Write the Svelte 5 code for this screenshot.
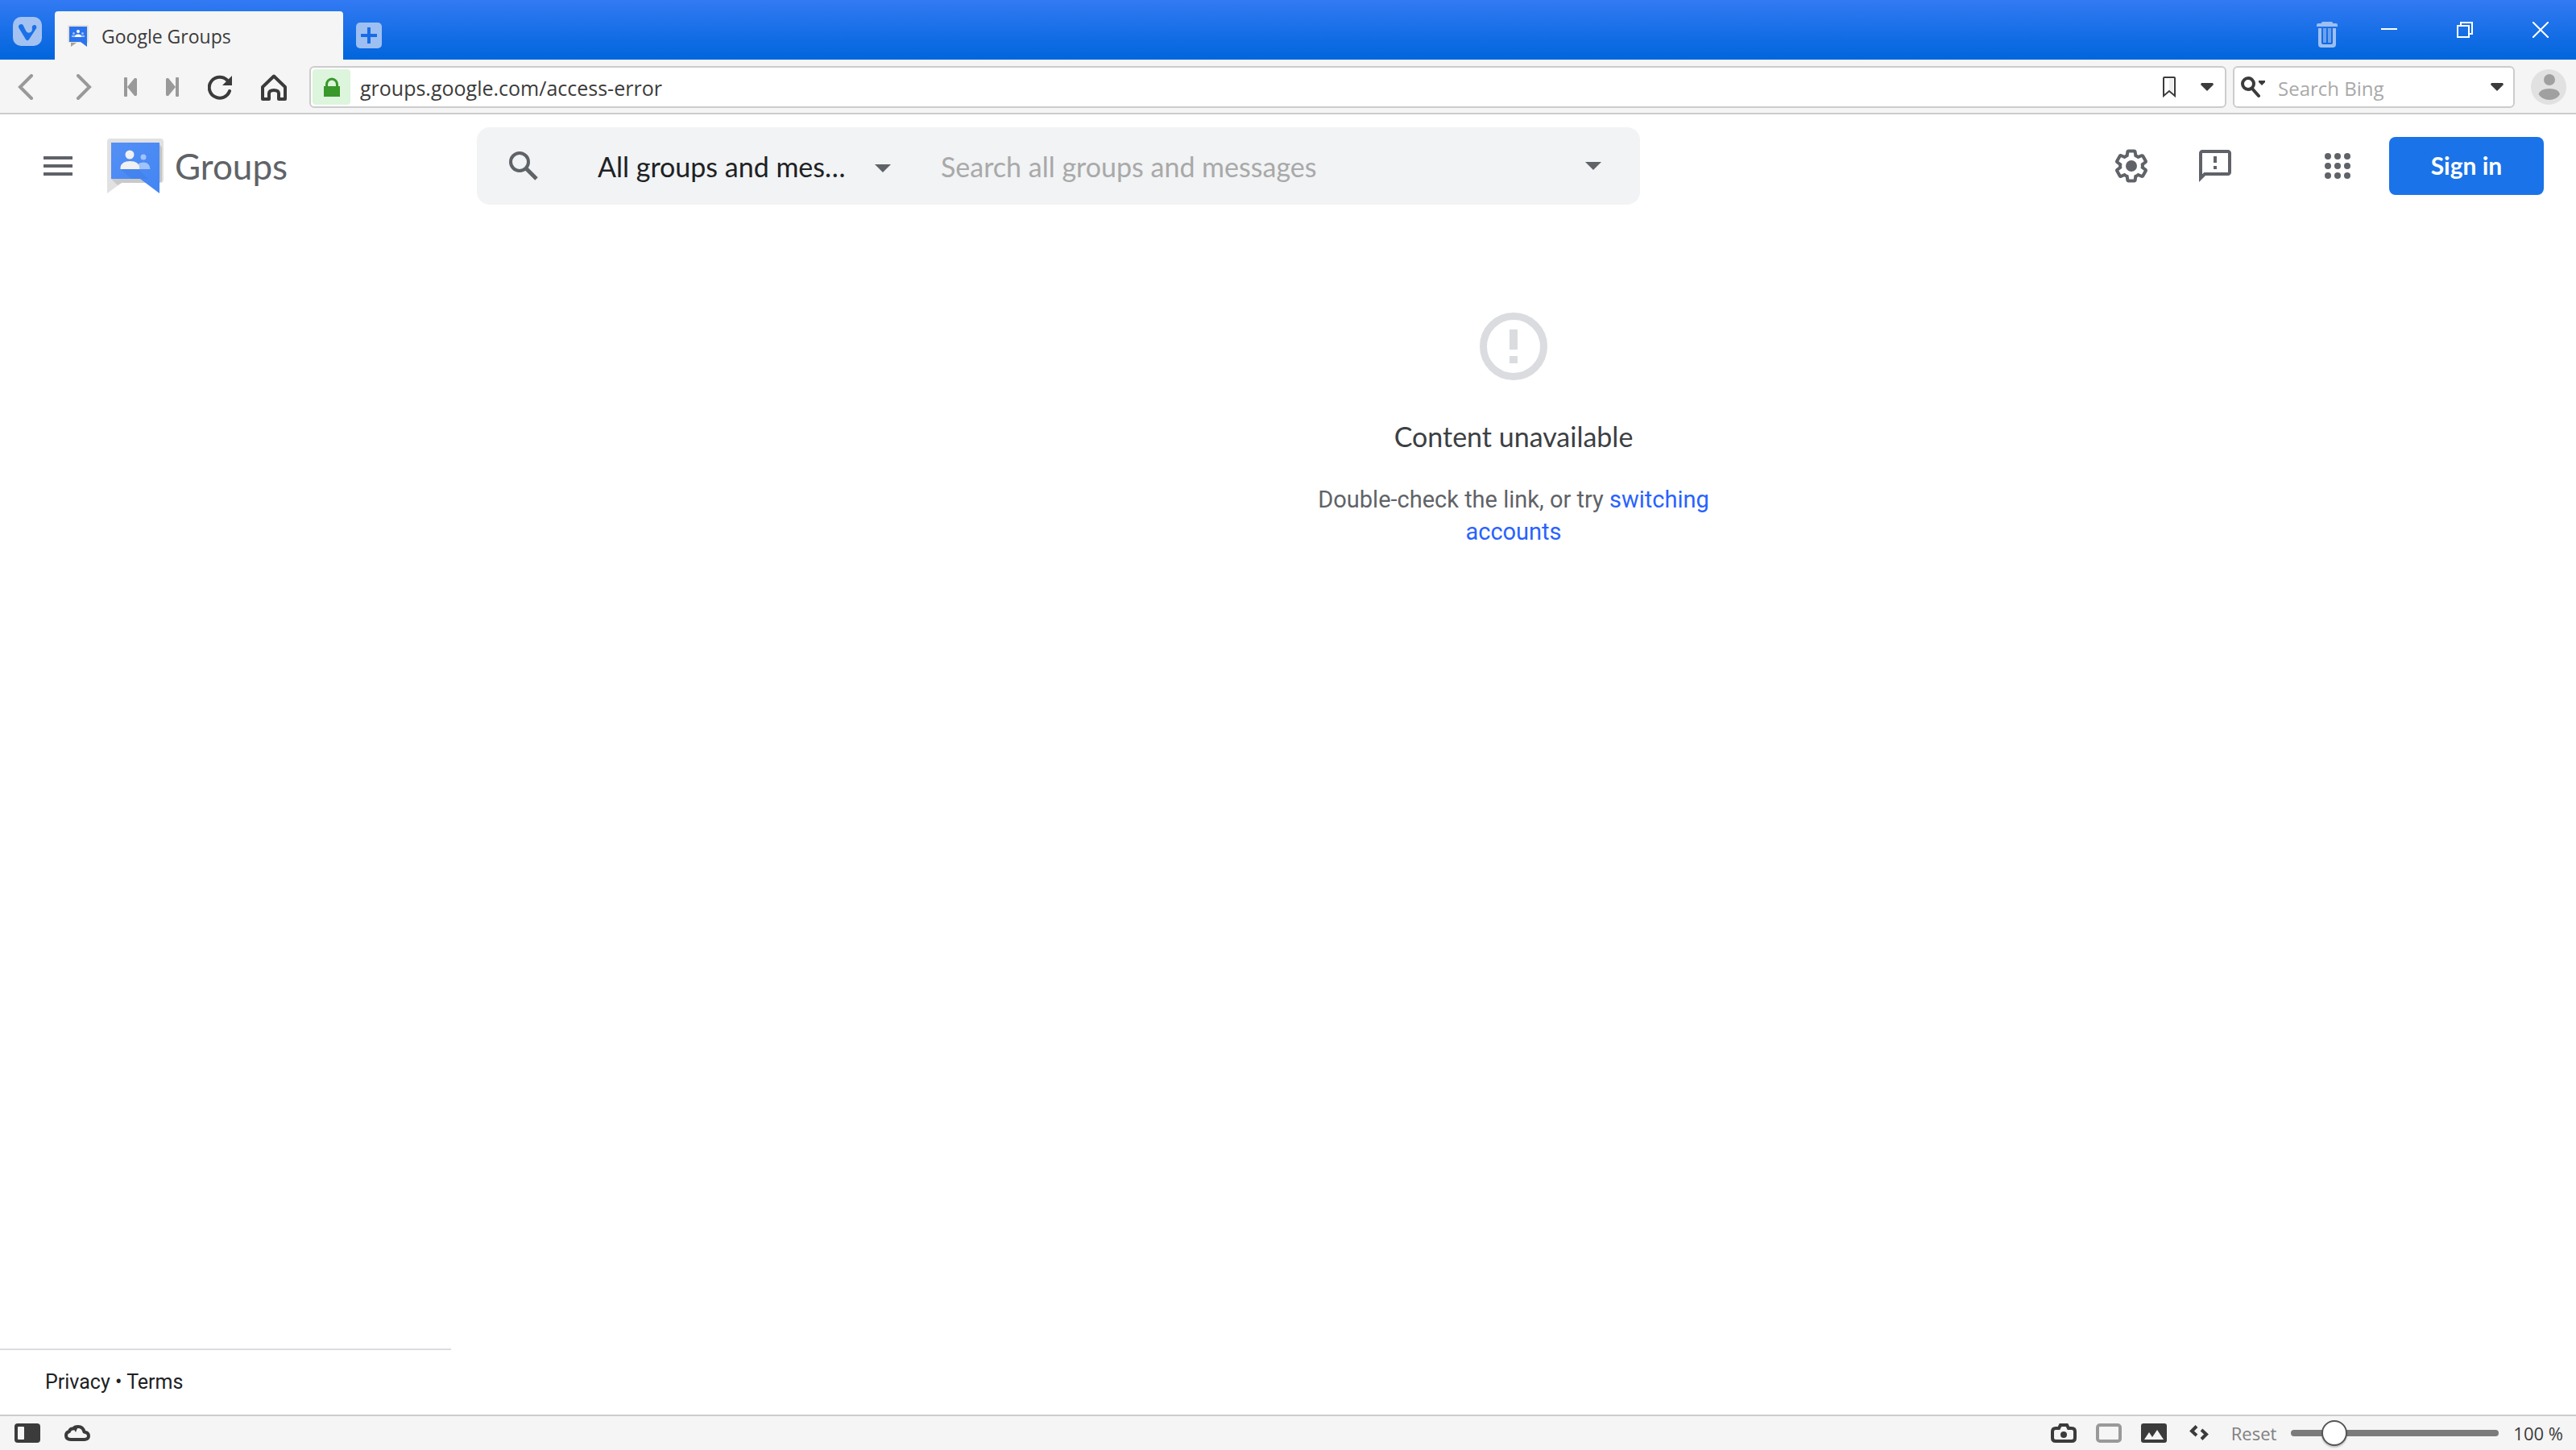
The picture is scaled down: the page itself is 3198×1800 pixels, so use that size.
<script lang="ts">
  let scope = $state('all');
  let query = $state('');
  let address = $state('groups.google.com/access-error');
  let webQuery = $state('');
  let zoom = $state(100);

  const MIN = 20;
  const MAX = 500;

  const dots = [4, 16, 28].flatMap((y) => [4, 16, 28].map((x) => ({ x, y })));
</script>

<div class="browser">
  <header class="titlebar">
    <button class="plain menu" aria-label="Vivaldi menu">
      <svg width="36" height="36" viewBox="0 0 36 36">
        <rect width="36" height="36" rx="10" fill="#a3c2f2" />
        <path d="M7.3 13.4a3.2 3.2 0 0 1 5.300-3.400L15.500 16q1.500 4 5 3.600 4.200-.8 3.300-6.600a2.800 2.800 0 1 1 5.200 1.200L20 28q-2 2.400-4 0z" fill="#1a70e8" />
      </svg>
    </button>
    <div class="tab">
      <svg width="26" height="28" viewBox="0 0 26 28">
        <path d="M0 2q0-2 2-2h22q2 0 2 2v20H10l-6 5v-5H2q-2 0-2-2z" fill="#e4e2d8" />
        <path d="M4 22h7l-7 5z" fill="#a5a298" />
        <path d="M2 2h22v25l-8-6H2z" fill="#2b74ef" />
        <circle cx="13" cy="8" r="2" fill="#fff" />
        <circle cx="7.500" cy="10.500" r="1.500" fill="#9fc0f8" />
        <circle cx="18.500" cy="10.500" r="1.500" fill="#9fc0f8" />
        <path d="M5 13h4v2H5zM17 13h4v2h-4z" fill="#9fc0f8" />
        <path d="M9 15v-1q0-2.500 4-2.500t4 2.500v1z" fill="#fff" />
      </svg>
      <span>Google Groups</span>
    </div>
    <button class="plain new-tab" aria-label="New tab">
      <svg width="32" height="32" viewBox="0 0 32 32">
        <rect width="32" height="32" rx="5" fill="#9dbff1" />
        <path d="M16 6v20M6 16h20" stroke="#176ce6" stroke-width="4" />
      </svg>
    </button>
    <div class="window-controls">
      <button class="plain trash" aria-label="Closed tabs">
        <svg width="26" height="32" viewBox="0 0 26 32">
          <path d="M0 6V4q0-2 2-2h3.500L7 0h12l1.500 2H24q2 0 2 2v2z" fill="#9dbff1" />
          <path d="M2 8h4v18q0 2 2 2h10q2 0 2-2V8h4v20q0 4-4 4H6q-4 0-4-4z" fill="#9dbff1" />
          <path d="M8 8h4v18H8zM14 8h4v18h-4z" fill="#6da1ec" />
        </svg>
      </button>
      <button class="plain" aria-label="Minimize">
        <svg width="20" height="20" viewBox="0 0 20 20"><path d="M0 9h20" stroke="#fff" stroke-width="2" /></svg>
      </button>
      <button class="plain" aria-label="Restore">
        <svg width="20" height="20" viewBox="0 0 20 20" fill="none" stroke="#fff" stroke-width="2">
          <path d="M1 5h14v14H1zM5 5V1h14v14h-4" />
        </svg>
      </button>
      <button class="plain" aria-label="Close">
        <svg width="20" height="20" viewBox="0 0 20 20"><path d="M0 0l20 20M20 0 0 20" stroke="#fff" stroke-width="2" /></svg>
      </button>
    </div>
  </header>

  <nav class="toolbar" aria-label="Browser">
    <div class="nav-buttons">
      <button class="plain" aria-label="Back">
        <svg width="20" height="32" viewBox="0 0 20 32" fill="none" stroke="#999" stroke-width="4" stroke-linecap="round">
          <path d="M17 2 3 16l14 14" />
        </svg>
      </button>
      <button class="plain forward" aria-label="Forward">
        <svg width="20" height="32" viewBox="0 0 20 32" fill="none" stroke="#999" stroke-width="4" stroke-linecap="round">
          <path d="M3 2l14 14L3 30" />
        </svg>
      </button>
      <button class="plain" aria-label="Rewind">
        <svg width="16" height="24" viewBox="0 0 16 24" fill="#999">
          <rect width="4" height="24" rx="1" /><path d="M4 12 13 1h2l1 1v20l-1 1h-2z" />
        </svg>
      </button>
      <button class="plain" aria-label="Fast forward">
        <svg width="16" height="24" viewBox="0 0 16 24" fill="#999">
          <rect x="12" width="4" height="24" rx="1" /><path d="M12 12 3 1H1L0 2v20l1 1h2z" />
        </svg>
      </button>
      <button class="plain" aria-label="Reload">
        <svg width="30" height="32" viewBox="0 0 30 32">
          <path d="M27 21A13 13 0 1 1 24 7.500" fill="none" stroke="#3b3b3b" stroke-width="4" stroke-linecap="round" />
          <path d="M30 2v12H18z" fill="#3b3b3b" />
        </svg>
      </button>
      <button class="plain" aria-label="Home">
        <svg width="32" height="33" viewBox="0 0 32 33" fill="none" stroke="#3b3b3b" stroke-width="4" stroke-linejoin="round">
          <path d="M2 16 16 2.500 30 16v15h-8v-7q0-4-6-4t-6 4v7H2z" />
        </svg>
      </button>
    </div>

    <div class="field address">
      <button class="secure" aria-label="Site information">
        <svg width="20" height="24" viewBox="0 0 20 24">
          <path d="M3.500 12V9a6.500 7 0 0 1 13 0v3" fill="none" stroke="#38982a" stroke-width="3" />
          <rect y="11" width="20" height="13" fill="#38982a" />
        </svg>
      </button>
      <input type="text" aria-label="Address" bind:value={address} />
      <button class="plain" aria-label="Bookmark page">
        <svg width="16" height="26" viewBox="0 0 16 26">
          <path d="M1 24V2q0-1 1-1h12q1 0 1 1v22l-7-6z" fill="#fff" stroke="#3b3b3b" stroke-width="2" />
          <path d="M8 3h5v17l-5-4z" fill="#eee" />
        </svg>
      </button>
      <button class="plain arrow" aria-label="Address history">
        <svg width="16" height="10" viewBox="0 0 16 10"><path d="M1 0h14l1 2-8 8-8-8z" fill="#3b3b3b" /></svg>
      </button>
    </div>

    <div class="field web-search">
      <button class="plain engine" aria-label="Search engine">
        <svg width="30" height="28" viewBox="0 0 30 28">
          <circle cx="9" cy="10" r="7" fill="none" stroke="#3b3b3b" stroke-width="4" />
          <path d="M14 16l8 9" stroke="#3b3b3b" stroke-width="4" stroke-linecap="round" />
          <path d="M22 6h8v2l-4 4-4-4z" fill="#3b3b3b" />
        </svg>
      </button>
      <input type="text" aria-label="Search Bing" placeholder="Search Bing" bind:value={webQuery} />
      <button class="plain" aria-label="Search history">
        <svg width="16" height="10" viewBox="0 0 16 10"><path d="M1 0h14l1 2-8 8-8-8z" fill="#3b3b3b" /></svg>
      </button>
    </div>

    <button class="plain" aria-label="Profile">
      <svg width="44" height="44" viewBox="0 0 44 44">
        <circle cx="22" cy="22" r="22" fill="#e1e1e1" />
        <circle cx="23" cy="13" r="7" fill="#a0a0a0" />
        <path d="M9.500 31q2-7 13.500-7t13 7q-4 7-13 7t-13.500-7z" fill="#a0a0a0" />
      </svg>
    </button>
  </nav>

  <div class="page">
    <header class="app-bar">
      <div class="brand">
        <button class="plain" aria-label="Main menu">
          <svg width="36" height="24" viewBox="0 0 36 24" fill="#5f6368">
            <path d="M0 0h36v4H0zM0 10h36v4H0zM0 20h36v4H0z" />
          </svg>
        </button>
        <a class="logo" href="#groups">
          <svg width="70" height="68" viewBox="0 0 70 68">
            <defs>
              <linearGradient id="bubble" x2="1" y2="1">
                <stop offset="0" stop-color="#5490f5" />
                <stop offset="1" stop-color="#4285f4" />
              </linearGradient>
            </defs>
            <path d="M4 0h62q4 0 4 4v47q0 4-4 4H18L0 68V4q0-4 4-4z" fill="#e1e1e1" />
            <path d="M5 50h38l9 5H18l-5 3z" fill="#c9c9c9" />
            <path d="M65 7l3 4v42l-3 2z" fill="#c4c4c4" />
            <path d="M5 5h60v63L41 50H5z" fill="url(#bubble)" />
            <path d="M17 38h22l12 12H30z" fill="#3f7ce6" opacity=".45" />
            <circle cx="45" cy="23" r="3.500" fill="#a1c2fa" />
            <path d="M39 31q3-1.500 6-1.500 8 0 8.500 8.500H39z" fill="#a1c2fa" />
            <circle cx="28" cy="20" r="5.500" fill="#f1f1f1" />
            <path d="M16.500 38v-2q1-8 12-8t11.500 8v2z" fill="#f1f1f1" />
          </svg>
          <span>Groups</span>
        </a>
      </div>

      <form class="group-search" role="search" onsubmit={(e) => e.preventDefault()}>
        <button class="plain" aria-label="Search">
          <svg width="36" height="36" viewBox="0 0 36 36" fill="none" stroke="#5f6368">
            <circle cx="13" cy="13" r="11" stroke-width="4" />
            <path d="M21 21l13 13" stroke-width="5" />
          </svg>
        </button>
        <div class="scope">
          <select aria-label="Search scope" bind:value={scope}>
            <option value="all">All groups and messages</option>
            <option value="mine">My groups</option>
          </select>
          <svg width="20" height="16" viewBox="0 0 20 16"><path d="M0 6h20L10 16z" fill="#5f6368" /></svg>
        </div>
        <input type="text" aria-label="Search all groups and messages" placeholder="Search all groups and messages" bind:value={query} />
        <button class="plain" type="button" aria-label="Search options">
          <svg width="20" height="10" viewBox="0 0 20 10"><path d="M0 0h20L10 10z" fill="#5f6368" /></svg>
        </button>
      </form>

      <div class="actions">
        <button class="plain" aria-label="Settings">
          <svg width="48" height="48" viewBox="0 0 24 24" fill="#5f6368">
            <path d="M13.850 22.250h-3.700c-.74 0-1.360-.54-1.450-1.270l-.27-1.890c-.27-.14-.53-.29-.79-.46l-1.800.720c-.7.260-1.470-.030-1.810-.650L2.200 15.530c-.35-.66-.2-1.440.36-1.880l1.530-1.190c-.01-.15-.02-.3-.02-.46 0-.15.010-.31.020-.46l-1.520-1.190c-.59-.45-.74-1.260-.37-1.880l1.850-3.190c.34-.62 1.110-.9 1.790-.63l1.810.730c.26-.17.520-.32.780-.46l.27-1.910c.09-.7.710-1.250 1.440-1.250h3.700c.74 0 1.360.54 1.450 1.270l.27 1.890c.27.14.530.29.790.46l1.800-.72c.71-.26 1.480.030 1.820.650l1.840 3.180c.36.660.2 1.440-.36 1.880l-1.520 1.190c.01.150.020.300.020.460s-.01.310-.02.460l1.520 1.190c.56.450.720 1.230.370 1.860l-1.860 3.220c-.34.620-1.110.9-1.800.630l-1.800-.72c-.26.170-.52.320-.78.460l-.27 1.910c-.1.680-.72 1.220-1.460 1.220zm-3.230-2h2.760l.37-2.550.53-.22c.44-.18.880-.44 1.340-.78l.45-.34 2.380.960 1.380-2.400-2.030-1.580.07-.56c.03-.26.060-.51.060-.78s-.03-.53-.06-.78l-.07-.56 2.030-1.580-1.390-2.400-2.390.96-.45-.35c-.42-.32-.87-.58-1.330-.77l-.52-.22-.37-2.550h-2.760l-.37 2.550-.53.210c-.44.190-.88.440-1.340.790l-.45.330-2.380-.95-1.390 2.390 2.030 1.580-.07.560a7 7 0 0 0-.06.790c0 .260.020.530.060.780l.07.560-2.030 1.580 1.380 2.400 2.390-.96.450.350c.43.330.860.580 1.330.770l.53.220z" />
            <circle cx="12" cy="12" r="3.500" />
          </svg>
        </button>
        <button class="plain" aria-label="Send feedback">
          <svg width="48" height="48" viewBox="0 0 24 24" fill="#5f6368">
            <path d="M20 2H4c-1.100 0-1.990.9-1.990 2L2 22l4-4h14c1.100 0 2-.9 2-2V4c0-1.100-.9-2-2-2zm0 14H5.170L4 17.170V4h16v12zm-9-4h2v2h-2zm0-6h2v4h-2z" />
          </svg>
        </button>
        <button class="plain apps" aria-label="Google apps">
          <svg width="32" height="32" viewBox="0 0 32 32" fill="#5f6368">
            {#each dots as dot}
              <circle cx={dot.x} cy={dot.y} r="4" />
            {/each}
          </svg>
        </button>
        <button class="sign-in">Sign in</button>
      </div>
    </header>

    <div class="body">
      <aside>
        <footer><a href="#privacy">Privacy</a> • <a href="#terms">Terms</a></footer>
      </aside>
      <main>
        <svg width="84" height="84" viewBox="0 0 84 84" fill="#dadce0">
          <circle cx="42" cy="42" r="37.500" fill="none" stroke="#dadce0" stroke-width="9" />
          <path d="M37 21h10v25H37zM37 54h10v9H37z" />
        </svg>
        <h1>Content unavailable</h1>
        <p>Double-check the link, or try <a href="#accounts">switching accounts</a></p>
      </main>
    </div>
  </div>

  <footer class="status">
    <button class="plain" aria-label="Toggle panel">
      <svg width="32" height="24" viewBox="0 0 32 24">
        <rect width="32" height="24" rx="4" fill="#3b3b3b" /><rect x="4" y="4" width="8" height="16" rx="1" fill="#f5f5f5" />
      </svg>
    </button>
    <button class="plain" aria-label="Sync">
      <svg width="32" height="20" viewBox="0 0 32 20">
        <path d="M8 18q-6 0-6-5 0-4 4-5 1-4 5-3.500 1.500-2.500 6-2.500 6 0 7.500 6.500 5.500 1 5.500 5t-5 4.500z" fill="none" stroke="#3b3b3b" stroke-width="4" stroke-linejoin="round" />
        <path d="M11 4l3 5 2-5z" fill="#3b3b3b" />
      </svg>
    </button>
    <div class="status-tools">
      <button class="plain" aria-label="Capture page">
        <svg width="32" height="24" viewBox="0 0 32 24">
          <path d="M6 6h4l2-4h8l2 4h4q4 0 4 4v8q0 4-4 4H6q-4 0-4-4v-8q0-4 4-4z" fill="none" stroke="#3b3b3b" stroke-width="4" />
          <circle cx="16" cy="14" r="4" fill="#3b3b3b" />
        </svg>
      </button>
      <button class="plain" aria-label="Tile tabs">
        <svg width="32" height="24" viewBox="0 0 32 24"><rect x="2" y="2" width="28" height="20" rx="3" fill="none" stroke="#999" stroke-width="4" /></svg>
      </button>
      <button class="plain" aria-label="Toggle images">
        <svg width="32" height="24" viewBox="0 0 32 24">
          <rect width="32" height="24" rx="3" fill="#3b3b3b" /><path d="M4 20l6-9 4 6 6-9 8 12z" fill="#f5f5f5" />
        </svg>
      </button>
      <button class="plain" aria-label="Page actions">
        <svg width="32" height="20" viewBox="0 0 32 20" fill="none" stroke="#3b3b3b" stroke-width="4">
          <path d="M13 1.500 7 7.500l6 5.500M19 6l6 5.500-6 6" />
        </svg>
      </button>
    </div>
    <div class="zoom">
      <button class="reset" onclick={() => (zoom = 100)}>Reset</button>
      <input type="range" aria-label="Page zoom" min={MIN} max={MAX} bind:value={zoom} />
      <output>{zoom} %</output>
    </div>
  </footer>
</div>

<style>
  :global(body) {
    margin: 0;
  }

  .browser {
    display: flex;
    flex-direction: column;
    min-height: 100vh;
    background: #fff;
    font-family: 'Open Sans', 'Noto Sans', sans-serif;
    font-size: 24px;
    color: #3b3b3b;
  }

  svg {
    display: block;
    flex: none;
  }
  input {
    box-sizing: border-box;
    min-width: 0;
    padding: 0;
    border: 0;
    outline: 0;
    background: none;
    font: inherit;
    color: inherit;
  }
  input::placeholder {
    color: #a9a9a9;
    opacity: 1;
  }
  a {
    color: inherit;
    text-decoration: none;
  }
  .plain {
    display: flex;
    padding: 0;
    border: 0;
    background: none;
    cursor: pointer;
  }

  .titlebar {
    display: flex;
    align-items: center;
    height: 74px;
    background: linear-gradient(#327af3, #0065dc);
  }
  .menu {
    margin: 4px 16px 0;
  }
  .tab {
    display: flex;
    align-items: center;
    align-self: flex-end;
    gap: 16px;
    box-sizing: border-box;
    width: 358px;
    height: 60px;
    margin-right: 16px;
    padding: 2px 16px 0;
    border-radius: 4px 4px 0 0;
    background: #f5f5f5;
    font-size: 23px;
  }
  .new-tab {
    margin-top: 14px;
  }
  .window-controls {
    display: flex;
    align-items: center;
    gap: 74px;
    margin-left: auto;
    padding-right: 34px;
  }
  .trash {
    margin-top: 12px;
    margin-right: -20px;
  }

  .toolbar {
    display: flex;
    align-items: center;
    gap: 8px;
    box-sizing: border-box;
    height: 68px;
    padding: 2px 12px 0 22px;
    border-bottom: 2px solid #ccc;
    background: #f5f5f5;
  }
  .nav-buttons {
    display: flex;
    align-items: center;
    gap: 36px;
    margin-right: 20px;
  }
  .forward {
    margin: 0 4px 0 16px;
  }
  .field {
    display: flex;
    align-items: center;
    box-sizing: border-box;
    height: 52px;
    border: 2px solid #ccc;
    border-radius: 6px;
    background: #fff;
  }
  .field input {
    flex: 1;
    padding-top: 2px;
  }
  .address {
    flex: 1;
    padding: 0 14px 0 2px;
    font-size: 25px;
  }
  .secure {
    display: flex;
    align-items: center;
    justify-content: center;
    width: 47px;
    height: 44px;
    margin-right: 12px;
    padding: 0;
    border: 0;
    border-radius: 4px;
    background: #dcf5dc;
  }
  .arrow {
    margin-left: 31px;
  }
  .web-search {
    width: 350px;
    margin-right: 12px;
    padding: 0 12px 0 8px;
  }
  .engine {
    margin-right: 16px;
  }

  .page {
    display: flex;
    flex: 1;
    flex-direction: column;
    font-family: Roboto, sans-serif;
    color: #202124;
  }
  .app-bar {
    display: flex;
    align-items: center;
    padding: 16px 40px 0 54px;
  }
  .brand {
    display: flex;
    align-items: center;
    gap: 43px;
    width: 538px;
  }
  .logo {
    display: flex;
    align-items: center;
    gap: 14px;
    font-family: Lato, sans-serif;
    font-size: 44px;
    color: #5f6368;
  }
  .group-search {
    display: flex;
    align-items: center;
    box-sizing: border-box;
    width: 1444px;
    height: 96px;
    padding: 0 48px 0 40px;
    border-radius: 16px;
    background: #f1f3f4;
    font-family: Lato, sans-serif;
    font-size: 34px;
  }
  .scope {
    display: flex;
    align-items: center;
    gap: 36px;
    margin: 0 62px 0 74px;
  }
  .scope select {
    width: 308px;
    padding: 0;
    border: 0;
    appearance: none;
    background: none;
    font: inherit;
    color: inherit;
    text-overflow: ellipsis;
  }
  .group-search input {
    flex: 1;
  }
  .actions {
    display: flex;
    align-items: center;
    gap: 56px;
    margin-left: auto;
  }
  .apps {
    margin: 0 -8px 0 56px;
  }
  .sign-in {
    width: 192px;
    height: 72px;
    padding: 0 0 2px;
    border: 0;
    border-radius: 8px;
    background: #1a73e8;
    font-family: Lato, sans-serif;
    font-size: 30px;
    font-weight: 700;
    color: #fff;
  }

  .body {
    display: flex;
    flex: 1;
  }
  aside {
    display: flex;
    flex-direction: column;
    justify-content: flex-end;
    width: 560px;
  }
  aside footer {
    padding: 24px 56px;
    border-top: 2px solid #dadce0;
    font-size: 25px;
    line-height: 32px;
  }
  main {
    display: flex;
    flex: 1;
    flex-direction: column;
    align-items: center;
    padding-top: 134px;
    text-align: center;
  }
  h1 {
    margin: 46px 0 34px;
    font-family: Lato, sans-serif;
    font-size: 34px;
    font-weight: 400;
    line-height: 48px;
    color: #3c4043;
  }
  p {
    max-width: 520px;
    margin: 0;
    font-size: 29px;
    line-height: 40px;
    color: #5f6368;
  }
  p a {
    color: #2962ff;
  }

  .status {
    display: flex;
    align-items: center;
    gap: 30px;
    box-sizing: border-box;
    height: 44px;
    padding: 0 16px 0 18px;
    border-top: 2px solid #ccc;
    background: #f5f5f5;
    font-size: 22px;
  }
  .status-tools {
    display: flex;
    align-items: center;
    gap: 24px;
    margin-left: auto;
  }
  .zoom {
    display: flex;
    align-items: center;
    gap: 18px;
    margin-left: -6px;
  }
  .reset {
    padding: 0;
    border: 0;
    background: none;
    font: inherit;
    color: #808080;
  }
  input[type='range'] {
    width: 258px;
    height: 34px;
    margin: 0;
    appearance: none;
  }
  input[type='range']::-webkit-slider-runnable-track {
    height: 8px;
    border-radius: 4px;
    background: #7b7b7b;
  }
  input[type='range']::-webkit-slider-thumb {
    box-sizing: border-box;
    width: 32px;
    height: 32px;
    margin-top: -12px;
    border: 2px solid #555;
    border-radius: 50%;
    appearance: none;
    background: #fff;
    box-shadow: 0 2px 2px rgba(0, 0, 0, 0.2);
  }
</style>
